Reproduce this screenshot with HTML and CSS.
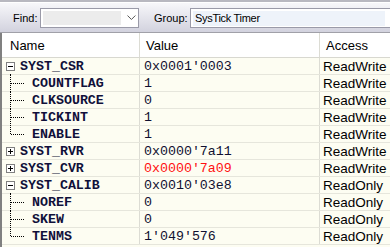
FILE: index.html
```html
<!DOCTYPE html>
<html>
<head>
<meta charset="utf-8">
<link rel="stylesheet" href="styles.css">
</head>
<body>
<div class="app">
  <div class="toolbar">
    <span class="lbl find-lbl">Find:</span>
    <div class="combo">
      <div class="combo-field"></div>
      <svg class="combo-arrow" width="9" height="6" viewBox="0 0 9 6"><path d="M0.5 0.5 L4.5 4.5 L8.5 0.5" fill="none" stroke="#555" stroke-width="1"/></svg>
    </div>
    <span class="lbl group-lbl">Group:</span>
    <div class="group-box"><span class="group-text">SysTick Timer</span></div>
  </div>
  <div class="grid">
    <div class="head">
      <div class="hc c1">Name</div>
      <div class="hc c2">Value</div>
      <div class="hc c3">Access</div>
    </div>
    <div class="rows">
      <div class="row">
        <div class="cell c1 parent"><span class="box minus"></span><span class="nm">SYST_CSR</span></div>
        <div class="cell c2 val">0x0001'0003</div>
        <div class="cell c3 acc">ReadWrite</div>
      </div>
      <div class="row">
        <div class="cell c1 child"><span class="tree mid"></span><span class="nm">COUNTFLAG</span></div>
        <div class="cell c2 val">1</div>
        <div class="cell c3 acc">ReadWrite</div>
      </div>
      <div class="row">
        <div class="cell c1 child"><span class="tree mid"></span><span class="nm">CLKSOURCE</span></div>
        <div class="cell c2 val">0</div>
        <div class="cell c3 acc">ReadWrite</div>
      </div>
      <div class="row">
        <div class="cell c1 child"><span class="tree mid"></span><span class="nm">TICKINT</span></div>
        <div class="cell c2 val">1</div>
        <div class="cell c3 acc">ReadWrite</div>
      </div>
      <div class="row">
        <div class="cell c1 child"><span class="tree last"></span><span class="nm">ENABLE</span></div>
        <div class="cell c2 val">1</div>
        <div class="cell c3 acc">ReadWrite</div>
      </div>
      <div class="row">
        <div class="cell c1 parent"><span class="box plus"></span><span class="nm">SYST_RVR</span></div>
        <div class="cell c2 val">0x0000'7a11</div>
        <div class="cell c3 acc">ReadWrite</div>
      </div>
      <div class="row">
        <div class="cell c1 parent"><span class="box plus"></span><span class="nm">SYST_CVR</span></div>
        <div class="cell c2 val red">0x0000'7a09</div>
        <div class="cell c3 acc">ReadWrite</div>
      </div>
      <div class="row">
        <div class="cell c1 parent"><span class="box minus"></span><span class="nm">SYST_CALIB</span></div>
        <div class="cell c2 val">0x0010'03e8</div>
        <div class="cell c3 acc">ReadOnly</div>
      </div>
      <div class="row">
        <div class="cell c1 child"><span class="tree mid"></span><span class="nm">NOREF</span></div>
        <div class="cell c2 val">0</div>
        <div class="cell c3 acc">ReadOnly</div>
      </div>
      <div class="row">
        <div class="cell c1 child"><span class="tree mid"></span><span class="nm">SKEW</span></div>
        <div class="cell c2 val">0</div>
        <div class="cell c3 acc">ReadOnly</div>
      </div>
      <div class="row">
        <div class="cell c1 child"><span class="tree last"></span><span class="nm">TENMS</span></div>
        <div class="cell c2 val">1'049'576</div>
        <div class="cell c3 acc">ReadOnly</div>
      </div>
    </div>
  </div>
</div>
</body>
</html>
```

FILE: styles.css
```css
html, body {
  margin: 0;
  padding: 0;
  background: #ffffff;
}
body {
  width: 390px;
  height: 247px;
  overflow: hidden;
  font-family: "Liberation Sans", Arial, sans-serif;
}
.app {
  width: 390px;
  height: 247px;
  display: flex;
  flex-direction: column;
  border-top: 2px solid #b8b8c0;
  box-sizing: border-box;
}
.toolbar {
  flex: none;
  display: flex;
  align-items: center;
  border-top: 1px solid #ffffff;
  background: linear-gradient(#f7f7fa, #d2d2de);
  border-bottom: 1px solid #a0a0a8;
  box-sizing: border-box;
  height: 31px;
  color: #000;
}
.lbl {
  font-size: 11px;
  flex: none;
}
.find-lbl {
  margin-left: 13px;
  width: 27px;
}
.combo {
  width: 99px;
  height: 20px;
  flex: none;
  box-sizing: border-box;
  border: 1px solid #9a9aa8;
  background: #fff;
  display: flex;
  align-items: center;
  padding: 2px;
}
.combo-field {
  width: 79px;
  height: 100%;
  background: #ececec;
}
.combo-arrow {
  margin-left: 6px;
}
.group-lbl {
  margin-left: 15px;
  width: 36px;
}
.group-box {
  flex: 1;
  height: 20px;
  box-sizing: border-box;
  border: 1px solid #9a9aa8;
  border-right: none;
  background: #fff;
  padding: 2px 0 1px 2px;
  display: flex;
}
.group-text {
  flex: 1;
  margin-right: 5px;
  background: #eef3fa;
  font-size: 11px;
  letter-spacing: -0.3px;
  line-height: 15px;
  padding-left: 2px;
}
.grid {
  flex: 1;
  display: flex;
  flex-direction: column;
  border-left: 2px solid #808080;
  background: #fdfdf2;
}
.head {
  display: flex;
  height: 25px;
  flex: none;
  background: #ffffff;
  border-bottom: 1px solid #d8d8d0;
  box-sizing: border-box;
  font-size: 13px;
}
.hc {
  display: flex;
  align-items: center;
  box-sizing: border-box;
}
.c1 { width: 138px; flex: none; border-right: 1px solid #dcdcd4; }
.c2 { width: 180px; flex: none; border-right: 1px solid #dcdcd4; }
.c3 { flex: 1; }
.head .c1 { padding-left: 8px; }
.head .c2 { padding-left: 6px; }
.head .c3 { padding-left: 6px; }
.rows {
  flex: 1;
}
.row {
  display: flex;
  height: 17px;
  border-bottom: 1px solid #e6e6dc;
  box-sizing: border-box;
}
.cell {
  display: flex;
  align-items: center;
  box-sizing: border-box;
  position: relative;
}
.nm {
  font-family: "Liberation Mono", "Courier New", monospace;
  font-weight: bold;
  font-size: 13.3px;
  color: #10103a;
}
.parent .nm { margin-left: 5px; }
.box {
  width: 9px;
  height: 9px;
  margin-left: 4px;
  box-sizing: border-box;
  border: 1px solid #808080;
  background: #fff;
  position: relative;
  flex: none;
}
.box::before {
  content: "";
  position: absolute;
  left: 1px;
  top: 3px;
  width: 5px;
  height: 1px;
  background: #000;
}
.box.plus::after {
  content: "";
  position: absolute;
  left: 3px;
  top: 1px;
  width: 1px;
  height: 5px;
  background: #000;
}
.tree {
  width: 30px;
  height: 100%;
  flex: none;
  position: relative;
}
.tree::before {
  content: "";
  position: absolute;
  left: 8px;
  top: -1px;
  bottom: -1px;
  border-left: 1px dotted #000;
}
.tree.last::before {
  bottom: 50%;
}
.tree::after {
  content: "";
  position: absolute;
  left: 9px;
  width: 13px;
  top: 50%;
  border-top: 1px dotted #000;
}
.val {
  font-family: "Liberation Mono", "Courier New", monospace;
  font-size: 13.3px;
  color: #101030;
  padding-left: 4px;
}
.val.red { color: #ff1010; }
.acc {
  font-size: 13.5px;
  padding-left: 3px;
  color: #000;
}
```
